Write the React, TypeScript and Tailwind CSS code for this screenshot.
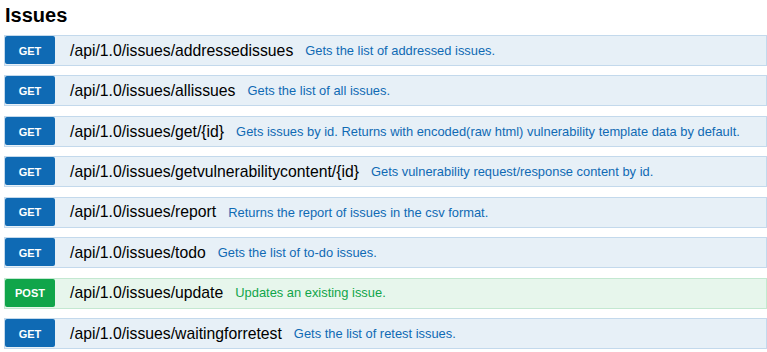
import React from "react";

type Op = { method: "GET" | "POST"; path: string; desc: string };

const ops: Op[] = [
  { method: "GET", path: "/api/1.0/issues/addressedissues", desc: "Gets the list of addressed issues." },
  { method: "GET", path: "/api/1.0/issues/allissues", desc: "Gets the list of all issues." },
  { method: "GET", path: "/api/1.0/issues/get/{id}", desc: "Gets issues by id. Returns with encoded(raw html) vulnerability template data by default." },
  { method: "GET", path: "/api/1.0/issues/getvulnerabilitycontent/{id}", desc: "Gets vulnerability request/response content by id." },
  { method: "GET", path: "/api/1.0/issues/report", desc: "Returns the report of issues in the csv format." },
  { method: "GET", path: "/api/1.0/issues/todo", desc: "Gets the list of to-do issues." },
  { method: "POST", path: "/api/1.0/issues/update", desc: "Updates an existing issue." },
  { method: "GET", path: "/api/1.0/issues/waitingforretest", desc: "Gets the list of retest issues." },
];

function Row({ op }: { op: Op }) {
  const isGet = op.method === "GET";
  return (
    <div
      className={
        isGet
          ? "flex h-[31px] items-start border border-[#c3d9ec] bg-[#e7f0f7]"
          : "flex h-[31px] items-start border border-[#c3e8d1] bg-[#e7f6ec]"
      }
    >
      <div
        className={
          isGet
            ? "flex h-[28px] w-[50px] shrink-0 items-center justify-center rounded-[2px] bg-[#0f6ab4] pt-[2px] text-[11px] font-bold text-white"
            : "flex h-[28px] w-[50px] shrink-0 items-center justify-center rounded-[2px] bg-[#10a54a] pt-[2px] text-[11px] font-bold text-white"
        }
      >
        {op.method}
      </div>
      <div className="flex h-[29px] items-center whitespace-nowrap">
        <span className="ml-[15px] text-[15.75px] text-black">{op.path}</span>
        <span className={isGet ? "ml-[12px] text-[12.9px] text-[#0f6ab4]" : "ml-[12px] text-[12.9px] text-[#10a54a]"}>
          {op.desc}
        </span>
      </div>
    </div>
  );
}

export default function App() {
  return (
    <div className="w-[767px] h-[352px] overflow-hidden bg-white pl-[4px]" style={{ fontFamily: '"Liberation Sans", Arial, sans-serif' }}>
      <h2 className="ml-[1px] h-[35px] pt-[1px] text-[20px] font-bold leading-[28px] text-black">Issues</h2>
      <div className="flex flex-col gap-[9.43px]">
        {ops.map((op) => (
          <Row key={op.path} op={op} />
        ))}
      </div>
    </div>
  );
}
